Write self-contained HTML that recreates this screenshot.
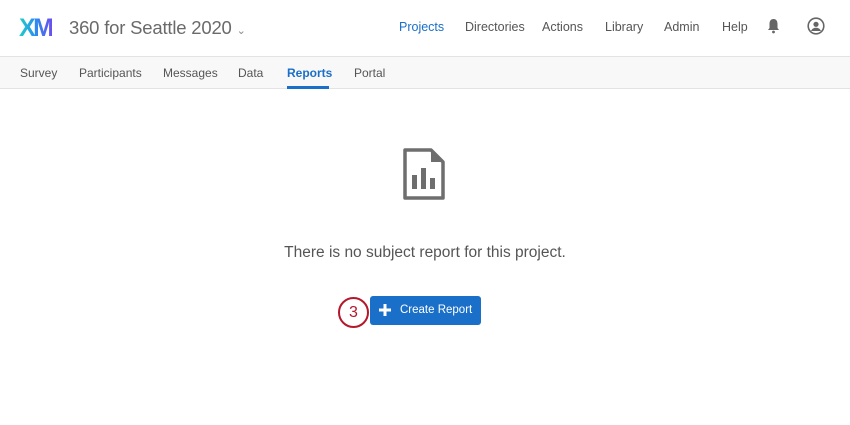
<!DOCTYPE html>
<html><head><style>
body{margin:0;width:850px;height:425px;background:#fff;font-family:"Liberation Sans",sans-serif;position:relative;overflow:hidden}
.a{position:absolute;white-space:nowrap}
.t{font-size:12px;color:#555;top:66px}
</style></head><body>
<div class="a" style="left:0;top:0;width:850px;height:56px;border-bottom:1px solid #e3e3e3"></div>
<div class="a" style="left:19px;top:14px;font-size:25px;font-weight:bold;letter-spacing:-2.5px;background:linear-gradient(90deg,#1fd1c4,#2a8cf0 50%,#6b4ff0);-webkit-background-clip:text;color:transparent">XM</div>
<div class="a" style="left:69px;top:17px;font-size:18.5px;color:#6a6a6a;letter-spacing:-0.2px">360 for Seattle 2020 <span style="font-size:11px;color:#888">&#8964;</span></div>
<div class="a" style="left:399px;top:20px;font-size:12.5px;color:#1a6fc9">Projects</div>
<div class="a" style="left:465px;top:20px;font-size:12.5px;color:#555">Directories</div>
<div class="a" style="left:542px;top:20px;font-size:12.5px;color:#555">Actions</div>
<div class="a" style="left:605px;top:20px;font-size:12.5px;color:#555">Library</div>
<div class="a" style="left:664px;top:20px;font-size:12.5px;color:#555">Admin</div>
<div class="a" style="left:722px;top:20px;font-size:12.5px;color:#555">Help</div>
<svg class="a" style="left:766px;top:18px" width="15" height="16" viewBox="0 0 15 16"><path d="M7.5 1C4.8 1 3.5 3 3.5 6v4L2 12h11l-1.5-2V6C11.5 3 10.2 1 7.5 1z" fill="#666"/><circle cx="7.5" cy="14" r="1.4" fill="#666"/></svg>
<svg class="a" style="left:807px;top:17px" width="18" height="18" viewBox="0 0 18 18"><circle cx="9" cy="9" r="7.8" fill="none" stroke="#666" stroke-width="1.6"/><circle cx="9" cy="7.3" r="2.6" fill="#666"/><path d="M4 14c1-2.5 3-3.3 5-3.3s4 .8 5 3.3z" fill="#666"/></svg>
<div class="a" style="left:0;top:57px;width:850px;height:31px;background:#f8f8f8;border-bottom:1px solid #e3e3e3"></div>
<div class="a t" style="left:20px">Survey</div>
<div class="a t" style="left:79px">Participants</div>
<div class="a t" style="left:163px">Messages</div>
<div class="a t" style="left:238px">Data</div>
<div class="a t" style="left:287px;color:#1a6fc9;font-weight:bold">Reports</div>
<div class="a" style="left:287px;top:86px;width:42px;height:3px;background:#1a6fc9"></div>
<div class="a t" style="left:354px">Portal</div>
<svg class="a" style="left:402px;top:148px" width="44" height="53" viewBox="0 0 44 53"><path d="M3 2h26l12 12v36H3z" fill="none" stroke="#6e6e6e" stroke-width="3.5" stroke-linejoin="round"/><path d="M29 2v12h12z" fill="#6e6e6e"/><rect x="10" y="27" width="5" height="14" fill="#6e6e6e"/><rect x="19" y="20" width="5" height="21" fill="#6e6e6e"/><rect x="28" y="30" width="5" height="11" fill="#6e6e6e"/></svg>
<div class="a" style="left:0;width:850px;top:244px;text-align:center;font-size:15.5px;color:#555">There is no subject report for this project.</div>
<div class="a" style="left:338px;top:297px;width:27px;height:27px;border:2px solid #b5172b;border-radius:50%;text-align:center;line-height:27px;font-size:16px;color:#b5172b">3</div>
<div class="a" style="left:370px;top:296px;width:111px;height:29px;background:#1a6fc9;border-radius:3px"></div>
<svg class="a" style="left:378px;top:303px" width="14" height="14" viewBox="0 0 14 14"><path d="M7 1v12M1 7h12" stroke="#fff" stroke-width="3"/></svg>
<div class="a" style="left:400px;top:304px;font-size:11.5px;color:#fff">Create Report</div>
</body></html>
